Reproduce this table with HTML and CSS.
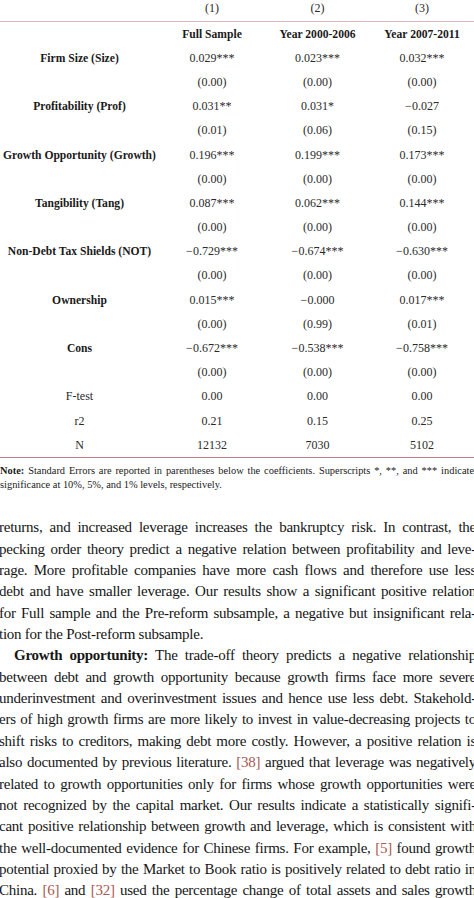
FILE: index.html
```html
<!DOCTYPE html>
<html lang="en">
<head>
<meta charset="utf-8">
<title>Regression results</title>
<link rel="stylesheet" href="styles.css">
</head>
<body>
<div class="page">
  <section class="stats">
    <div class="row head">
      <div></div><div class="num">(1)</div><div class="num">(2)</div><div class="num">(3)</div>
    </div>
    <div class="row">
      <div></div><div class="lbl">Full Sample</div><div class="lbl">Year 2000-2006</div><div class="lbl">Year 2007-2011</div>
    </div>
    <div class="row"><div class="lbl">Firm Size (Size)</div><div class="val">0.029***</div><div class="val">0.023***</div><div class="val">0.032***</div></div>
    <div class="row"><div></div><div class="val">(0.00)</div><div class="val">(0.00)</div><div class="val">(0.00)</div></div>
    <div class="row"><div class="lbl">Profitability (Prof)</div><div class="val">0.031**</div><div class="val">0.031*</div><div class="val">−0.027</div></div>
    <div class="row"><div></div><div class="val">(0.01)</div><div class="val">(0.06)</div><div class="val">(0.15)</div></div>
    <div class="row"><div class="lbl">Growth Opportunity (Growth)</div><div class="val">0.196***</div><div class="val">0.199***</div><div class="val">0.173***</div></div>
    <div class="row"><div></div><div class="val">(0.00)</div><div class="val">(0.00)</div><div class="val">(0.00)</div></div>
    <div class="row"><div class="lbl">Tangibility (Tang)</div><div class="val">0.087***</div><div class="val">0.062***</div><div class="val">0.144***</div></div>
    <div class="row"><div></div><div class="val">(0.00)</div><div class="val">(0.00)</div><div class="val">(0.00)</div></div>
    <div class="row"><div class="lbl">Non-Debt Tax Shields (NOT)</div><div class="val">−0.729***</div><div class="val">−0.674***</div><div class="val">−0.630***</div></div>
    <div class="row"><div></div><div class="val">(0.00)</div><div class="val">(0.00)</div><div class="val">(0.00)</div></div>
    <div class="row"><div class="lbl">Ownership</div><div class="val">0.015***</div><div class="val">−0.000</div><div class="val">0.017***</div></div>
    <div class="row"><div></div><div class="val">(0.00)</div><div class="val">(0.99)</div><div class="val">(0.01)</div></div>
    <div class="row"><div class="lbl">Cons</div><div class="val">−0.672***</div><div class="val">−0.538***</div><div class="val">−0.758***</div></div>
    <div class="row"><div></div><div class="val">(0.00)</div><div class="val">(0.00)</div><div class="val">(0.00)</div></div>
    <div class="row"><div class="val">F-test</div><div class="val">0.00</div><div class="val">0.00</div><div class="val">0.00</div></div>
    <div class="row"><div class="val">r2</div><div class="val">0.21</div><div class="val">0.15</div><div class="val">0.25</div></div>
    <div class="row last"><div class="val">N</div><div class="val">12132</div><div class="val">7030</div><div class="val">5102</div></div>
  </section>

  <p class="note">
    <span class="jl"><b>Note:</b> Standard Errors are reported in parentheses below the coefficients. Superscripts *, **, and *** indicate</span>
    <span class="ll">significance at 10%, 5%, and 1% levels, respectively.</span>
  </p>

  <div class="body">
    <p class="para">
      <span class="jl">returns, and increased leverage increases the bankruptcy risk. In contrast, the</span>
      <span class="jl">pecking order theory predict a negative relation between profitability and leve-</span>
      <span class="jl">rage. More profitable companies have more cash flows and therefore use less</span>
      <span class="jl">debt and have smaller leverage. Our results show a significant positive relation</span>
      <span class="jl">for Full sample and the Pre-reform subsample, a negative but insignificant rela-</span>
      <span class="ll">tion for the Post-reform subsample.</span>
    </p>
    <p class="para">
      <span class="jl indent"><b>Growth opportunity:</b> The trade-off theory predicts a negative relationship</span>
      <span class="jl">between debt and growth opportunity because growth firms face more severe</span>
      <span class="jl">underinvestment and overinvestment issues and hence use less debt. Stakehold-</span>
      <span class="jl">ers of high growth firms are more likely to invest in value-decreasing projects to</span>
      <span class="jl">shift risks to creditors, making debt more costly. However, a positive relation is</span>
      <span class="jl">also documented by previous literature. <a class="ref">[38]</a> argued that leverage was negatively</span>
      <span class="jl">related to growth opportunities only for firms whose growth opportunities were</span>
      <span class="jl">not recognized by the capital market. Our results indicate a statistically signifi-</span>
      <span class="jl">cant positive relationship between growth and leverage, which is consistent with</span>
      <span class="jl">the well-documented evidence for Chinese firms. For example, <a class="ref">[5]</a> found growth</span>
      <span class="jl">potential proxied by the Market to Book ratio is positively related to debt ratio in</span>
      <span class="jl">China. <a class="ref">[6]</a> and <a class="ref">[32]</a> used the percentage change of total assets and sales growth</span>
    </p>
  </div>
</div>
</body>
</html>
```
FILE: styles.css
```css
html, body {
  margin: 0;
  padding: 0;
  background: #ffffff;
}
body {
  width: 474px;
  height: 898px;
  overflow: hidden;
  font-family: "Liberation Serif", "Times New Roman", serif;
  color: #1a1a1a;
}
.page {
  width: 474px;
}
.stats {
  display: flex;
  flex-direction: column;
}
.row {
  display: grid;
  grid-template-columns: 159px 106px 105px 104px;
  height: 24.2px;
  align-items: center;
  text-align: center;
  white-space: nowrap;
}
.row.head {
  height: 17px;
  padding-bottom: 4px;
  border-bottom: 1px solid #dcb8bd;
}
.row.last {
  border-bottom: 1px solid #c0807f;
}
.num, .val {
  font-size: 12px;
  color: #2a2a2a;
}
.lbl {
  font-size: 11.6px;
  font-weight: bold;
  color: #1a1a1a;
}
.note {
  margin: 6px 0 0 0;
  font-size: 10.4px;
  line-height: 14px;
  color: #1a1a1a;
}
.jl {
  display: block;
  text-align: justify;
  text-align-last: justify;
}
.ll {
  display: block;
  text-align: left;
}
.body {
  margin-top: 25px;
  width: 477px;
  margin-left: -1px;
}
.para {
  margin: 0;
  font-size: 15px;
  line-height: 21.35px;
  letter-spacing: -0.25px;
  color: #161616;
}
.indent {
  text-indent: 15px;
}
.ref {
  color: #a85a50;
  text-decoration: none;
}
```
